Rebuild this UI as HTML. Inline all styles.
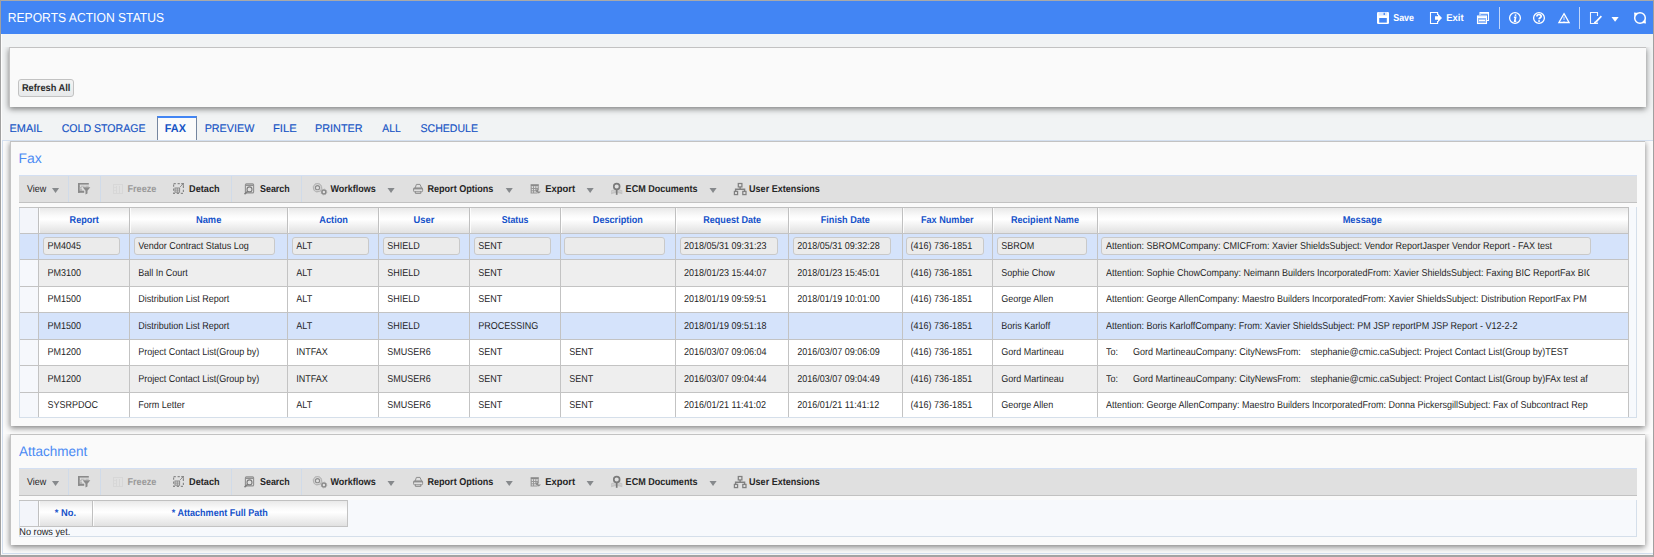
<!DOCTYPE html><html><head><meta charset='utf-8'><title>Reports Action Status</title><style>
html,body{margin:0;padding:0}
body{width:1654px;height:557px;position:relative;overflow:hidden;background:#f1f3f4;font-family:"Liberation Sans", sans-serif;}
.a{position:absolute;box-sizing:border-box}
.t{position:absolute;white-space:pre;line-height:20px;transform-origin:0 0;font-family:"Liberation Sans", sans-serif;text-rendering:geometricPrecision}
.c{position:absolute;white-space:pre;line-height:20px;font-size:10px;color:#1f1f1f;overflow:hidden;transform:scaleX(.9);transform-origin:0 0}
.panel{position:absolute;box-sizing:border-box;background:#fafafa;border-top:1px solid #c2c2c2;border-left:1px solid #c4c4c4;box-shadow:0 1.5px 6px rgba(0,0,0,.5);clip-path:inset(0 -14px -14px -14px)}
.tbar{position:absolute;box-sizing:border-box;background:#e0e0e0;border-top:1px solid #d3dff2;border-bottom:1px solid #c2c2c2}
.sep{position:absolute;width:1px;background:#d0dbe9}
.hc{position:absolute;box-sizing:border-box;border-left:1px solid #c0c0c0;border-top:1px solid #c0c0c0;border-bottom:1px solid #c0c0c0;background:linear-gradient(#e9e9e9 0%,#fafafa 30%,#ffffff 45%,#f4f4f4 65%,#e1e1e1 100%);box-shadow:inset 1px 0 0 rgba(255,255,255,.8)}
.in{position:absolute;box-sizing:border-box;border:1px solid #c9c9c9;border-radius:3px;background:#ebebeb}
.vl{position:absolute;width:1px;background:#c4c4c4}
.hl{position:absolute;height:1px;background:#c4c4c4}
svg{position:absolute;overflow:visible}
</style></head><body><div class='a' style='left:2px;top:140px;width:1651px;height:414px;border:1px solid #d3dfef;border-right:none;background:#fbfbfb'></div><div class='a' style='left:0px;top:0px;width:1654px;height:1px;background:#a9a9a9;z-index:5'></div><div class='a' style='left:0px;top:0px;width:1px;height:557px;background:#a0a0a0;z-index:5'></div><div class='a' style='left:1px;top:34px;width:1px;height:521px;background:#fdfdfd;z-index:5'></div><div class='a' style='left:1653px;top:0px;width:1px;height:557px;background:#a0a0a0;z-index:5'></div><div class='a' style='left:0px;top:555px;width:1654px;height:2px;background:#a3a3a3;z-index:5'></div><div class='a' style='left:1px;top:554px;width:1652px;height:1px;background:#f4f5f6;z-index:5'></div><div class='a' style='left:1px;top:1px;width:1652px;height:33px;background:#4285f4'></div><svg class='a' style='left:0;top:0' width='1654' height='36' viewBox='0 0 1654 36'><g><rect x='1377' y='12' width='12' height='12' rx='1.3' fill='#fff'/><rect x='1379.2' y='18' width='7.6' height='4.6' fill='#4285f4'/><rect x='1378.6' y='12' width='8.6' height='3.6' fill='#dbe7fd'/><rect x='1383.6' y='12.8' width='1.3' height='2.2' fill='#4285f4'/></g><g><path d='M1437.6 15v-2.5h-7.1v11h7.1V21' fill='none' stroke='#fff' stroke-width='1.1'/><path d='M1435 16.2h3v-2.4l4 4.2-4 4.2v-2.4h-3z' fill='#fff'/></g><g fill='none' stroke='#fff' stroke-width='1.1'><path d='M1480 15v-2.5h8.5v8h-2' /><path d='M1480.5 13.4h8' stroke-width='1.8' opacity='.8'/><rect x='1477.5' y='16' width='9' height='7.5' fill='#8db6f8'/><path d='M1477.5 17.2h9' stroke-width='1.6'/><path d='M1479 20.4h6' stroke-width='1.3'/></g><rect x='1499' y='7' width='1' height='22' fill='#d5e3fb' opacity='.85'/><rect x='1579' y='7' width='1' height='22' fill='#d5e3fb' opacity='.85'/><circle cx='1515' cy='18' r='5.4' fill='none' stroke='#fff' stroke-width='1.3'/><path d='M1515.7 14.3l-.3 1.6M1513.9 17.3h1.7l-.9 3.9h1.6' stroke='#fff' stroke-width='1.6' fill='none'/><circle cx='1539' cy='18' r='5.4' fill='none' stroke='#fff' stroke-width='1.3'/><path d='M1536.9 16.5c0-2.6 4.3-2.6 4.3-.2 0 1.5-2.1 1.5-2.1 3' stroke='#fff' stroke-width='1.7' fill='none'/><rect x='1538.2' y='20.2' width='1.7' height='1.7' fill='#fff'/><path d='M1564 13.7l5.1 8.8h-10.2z' fill='none' stroke='#fff' stroke-width='1.3'/><path d='M1564 16.6v3.4M1564 21v.9' stroke='#cfe0fc' stroke-width='1'/><path d='M1597.5 16v-3.5h-7v11h7v-1' fill='none' stroke='#fff' stroke-width='1.1' opacity='.92'/><path d='M1601.4 16.2l-6.6 7' stroke='#fff' stroke-width='1.7'/><path d='M1593.6 23.6l1-2 1.2 1.2z' fill='#fff'/><path d='M1611.5 17h7.2l-3.6 4.8z' fill='#fff'/><circle cx='1640' cy='18' r='5.3' fill='none' stroke='#fff' stroke-width='1.5'/><path d='M1634 12.6l4.6.4-4 4zM1646 23.4l-4.6-.4 4-4z' fill='#fff'/></svg><div class='panel' style='left:9px;top:47px;width:1637px;height:60px'></div><div class='a' style='left:18px;top:79px;width:56px;height:18px;border:1px solid #c2c2c2;border-radius:3px;background:linear-gradient(#f3f3f3,#e7e9eb)'></div><div class='a' style='left:157px;top:116px;width:40px;height:24px;background:#fbfbfb;border:1px solid #75869f;border-top:2px solid #4285f4;border-bottom:none'></div><div class='panel' style='left:10px;top:141px;width:1635px;height:285px'></div><div class='tbar' style='left:19px;top:175px;width:1618px;height:28px'></div><div class='sep' style='left:68px;top:176px;height:26px'></div><div class='sep' style='left:100px;top:176px;height:26px'></div><div class='sep' style='left:231px;top:176px;height:26px'></div><div class='sep' style='left:301px;top:176px;height:26px'></div><svg class='a' style='left:0;top:0px' width='1654' height='210' viewBox='0 0 1654 210'><path d='M52.0 187.9h7.1l-3.55 5z' fill='#86898c'/><path d='M387.5 187.9h7.1l-3.55 5z' fill='#86898c'/><path d='M505.7 187.9h7.1l-3.55 5z' fill='#86898c'/><path d='M586.6 187.9h7.1l-3.55 5z' fill='#86898c'/><path d='M709.5 187.9h7.1l-3.55 5z' fill='#86898c'/><g fill='#8a8a8a'><rect x='78' y='183' width='10.8' height='1.6'/><rect x='78' y='183' width='1.7' height='9.8'/><rect x='78' y='190.7' width='6.2' height='2.1'/><path d='M78 185.7h2.2v.9h-2.2zM81 185.7h3.6v.9h-3.6zM85.4 185.7h3.4v.9h-3.4z' opacity='.75'/><rect x='79.7' y='187.4' width='2' height='1' opacity='.8'/><rect x='79.7' y='189.4' width='2.4' height='1' opacity='.8'/><path d='M82.7 187.2h7.6l-2.8 3.5v2.9l-2 .8v-3.7z'/></g><g stroke='#d7d7d7' fill='none' stroke-width='1'><rect x='113.5' y='184.5' width='9' height='9'/><path d='M116.5 186v7M119.5 186v7'/><path d='M114 187.5h2M114 190.5h2' stroke-width='.8'/></g><g stroke='#8a8a8a' fill='none' stroke-width='1.2'><rect x='173.6' y='183.6' width='9.8' height='9.8' stroke-dasharray='2.2 1.8'/><rect x='175' y='188' width='4.6' height='4.2' stroke-width='1'/><path d='M175 190.1h4.6M177.3 188v4.2' stroke-width='.8'/><path d='M180 187l3-3M181 183.8h2.4v2.4' stroke-width='.9'/></g><g stroke='#909090' fill='none'><rect x='245.4' y='183.7' width='8.2' height='9.2' rx='1' stroke-width='1.1'/><path d='M245.4 185.2h8.2' stroke-width='1.6'/><circle cx='249.5' cy='189.4' r='2.5' stroke-width='1.1' stroke='#7c7c7c'/><path d='M247.7 191.3l-3.2 2.8' stroke-width='1.5' stroke='#7c7c7c'/></g><g fill='none'><circle cx='317.5' cy='187.7' r='4' stroke='#b3b3b3' stroke-width='1.3'/><circle cx='317.5' cy='187.7' r='4.4' stroke='#bdbdbd' stroke-width='.9' stroke-dasharray='1.6 1.85'/><circle cx='317.5' cy='187.7' r='2.1' stroke='#8c8c8c' stroke-width='1.15'/><circle cx='323.9' cy='192' r='2' stroke='#8a8a8a' stroke-width='1.6'/><circle cx='323.9' cy='192' r='3' stroke='#a8a8a8' stroke-width='.7' stroke-dasharray='1.2 1.15'/></g><g stroke='#8e8e8e' fill='none' stroke-width='1'><path d='M415.2 188l1.2-3.6h3.6l1.6 3.6'/><rect x='413.6' y='188' width='9' height='3.8' rx='1'/><path d='M413.6 188.6h9' stroke-width='1.6'/><path d='M415.4 191.2v2.2h5.4v-2.2' /></g><g fill='#8a8a8a'><rect x='530.6' y='184.2' width='8.2' height='2'/><path d='M530.6 186.2h1.2v7.4h-1.2zM533 186.2h1v7.4h-1zM535.3 186.2h1v4h-1zM537.7 186.2h1.1v4h-1.1zM530.6 188h8v.9h-8zM530.6 190.3h6v.9h-6zM530.6 192.6h7v1h-7z' opacity='.85'/><path d='M536.6 189.2l1.5 0 .2 2.2h2.7l-2.2 2.2-3-2z'/></g><g><path d='M611 190.6l4.9-2.2v4.6l-4.9 1.2zM622.3 190.6l-4.9-2.2v4.6l4.9 1.2z' fill='#c4c4c4'/><path d='M611.6 192l3.6-1.4M618.2 190.6l3.6 1.4' stroke='#d6d6d6' stroke-width='.7'/><circle cx='616.7' cy='186.5' r='2.9' fill='#e0e0e0' stroke='#7a7a7a' stroke-width='1.7'/><rect x='615.85' y='189.6' width='1.7' height='5.2' fill='#7a7a7a'/></g><g stroke='#808080' fill='none' stroke-width='1.25'><rect x='738.3' y='183.5' width='3.6' height='3.4'/><path d='M740.1 187v2.2M735.6 191.4v-2.2h9v2.2' stroke-width='1.4'/><rect x='734.4' y='191.4' width='3.2' height='3.2'/><rect x='742.8' y='191.4' width='3.2' height='3.2'/></g></svg><div class='a' style='left:19px;top:207px;width:1618px;height:211px;border:1px solid #d5dfea;border-top:none;background:#f7f9fc'></div><div class='a' style='left:19px;top:207px;width:1610px;height:1px;background:#c3c3c3'></div><div class='a' style='left:20px;top:208px;width:18px;height:25px;background:#f3f5fa'></div><div class='hc' style='left:38px;top:207px;width:91px;height:27px'></div><div class='hc' style='left:129px;top:207px;width:158px;height:27px'></div><div class='hc' style='left:287px;top:207px;width:91px;height:27px'></div><div class='hc' style='left:378px;top:207px;width:91px;height:27px'></div><div class='hc' style='left:469px;top:207px;width:91px;height:27px'></div><div class='hc' style='left:560px;top:207px;width:115px;height:27px'></div><div class='hc' style='left:675px;top:207px;width:113px;height:27px'></div><div class='hc' style='left:788px;top:207px;width:114px;height:27px'></div><div class='hc' style='left:902px;top:207px;width:90px;height:27px'></div><div class='hc' style='left:992px;top:207px;width:105px;height:27px'></div><div class='hc' style='left:1097px;top:207px;width:531px;height:27px'></div><div class='a' style='left:20px;top:234px;width:18px;height:25px;background:#d5e3fb'></div><div class='a' style='left:39px;top:234px;width:1589px;height:25px;background:#d5e3fb'></div><div class='a' style='left:20px;top:260px;width:18px;height:26px;background:#f6f8fc'></div><div class='a' style='left:39px;top:260px;width:1589px;height:26px;background:#eeeeee'></div><div class='a' style='left:20px;top:287px;width:18px;height:25px;background:#f6f8fc'></div><div class='a' style='left:39px;top:287px;width:1589px;height:25px;background:#ffffff'></div><div class='a' style='left:20px;top:313px;width:18px;height:26px;background:#e4edfc'></div><div class='a' style='left:39px;top:313px;width:1589px;height:26px;background:#d5e3fb'></div><div class='a' style='left:20px;top:340px;width:18px;height:25px;background:#f6f8fc'></div><div class='a' style='left:39px;top:340px;width:1589px;height:25px;background:#ffffff'></div><div class='a' style='left:20px;top:366px;width:18px;height:26px;background:#f6f8fc'></div><div class='a' style='left:39px;top:366px;width:1589px;height:26px;background:#eeeeee'></div><div class='a' style='left:20px;top:393px;width:18px;height:24px;background:#f6f8fc'></div><div class='a' style='left:39px;top:393px;width:1589px;height:24px;background:#ffffff'></div><div class='hl' style='left:20px;top:233px;width:1608px;background:#c3c3c3'></div><div class='hl' style='left:20px;top:259px;width:1608px;background:#c3c3c3'></div><div class='hl' style='left:20px;top:286px;width:1608px;background:#c3c3c3'></div><div class='hl' style='left:20px;top:312px;width:1608px;background:#c3c3c3'></div><div class='hl' style='left:20px;top:339px;width:1608px;background:#c3c3c3'></div><div class='hl' style='left:20px;top:365px;width:1608px;background:#c3c3c3'></div><div class='hl' style='left:20px;top:392px;width:1608px;background:#c3c3c3'></div><div class='vl' style='left:38px;top:233px;height:184px;background:#c3c3c3'></div><div class='vl' style='left:129px;top:233px;height:184px;background:#c3c3c3'></div><div class='vl' style='left:287px;top:233px;height:184px;background:#c3c3c3'></div><div class='vl' style='left:378px;top:233px;height:184px;background:#c3c3c3'></div><div class='vl' style='left:469px;top:233px;height:184px;background:#c3c3c3'></div><div class='vl' style='left:560px;top:233px;height:184px;background:#c3c3c3'></div><div class='vl' style='left:675px;top:233px;height:184px;background:#c3c3c3'></div><div class='vl' style='left:788px;top:233px;height:184px;background:#c3c3c3'></div><div class='vl' style='left:902px;top:233px;height:184px;background:#c3c3c3'></div><div class='vl' style='left:992px;top:233px;height:184px;background:#c3c3c3'></div><div class='vl' style='left:1097px;top:233px;height:184px;background:#c3c3c3'></div><div class='vl' style='left:1628px;top:233px;height:184px;background:#c3c3c3'></div><div class='vl' style='left:1628px;top:207px;height:27px;background:#c0c0c0'></div><div class='in' style='left:43.4px;top:237px;width:76.4px;height:17.6px'></div><div class='in' style='left:134.3px;top:237px;width:140.5px;height:17.6px'></div><div class='in' style='left:292.0px;top:237px;width:76.7px;height:17.6px'></div><div class='in' style='left:383.4px;top:237px;width:76.3px;height:17.6px'></div><div class='in' style='left:474.1px;top:237px;width:76.5px;height:17.6px'></div><div class='in' style='left:564.3px;top:237px;width:100.6px;height:17.6px'></div><div class='in' style='left:680.1px;top:237px;width:97.5px;height:17.6px'></div><div class='in' style='left:793.1px;top:237px;width:97.5px;height:17.6px'></div><div class='in' style='left:906.3px;top:237px;width:77.4px;height:17.6px'></div><div class='in' style='left:997.2px;top:237px;width:89.4px;height:17.6px'></div><div class='in' style='left:1101.3px;top:237px;width:490.2px;height:17.6px'></div><div class='panel' style='left:10px;top:434px;width:1635px;height:111px'></div><div class='tbar' style='left:19px;top:468px;width:1618px;height:28px'></div><div class='sep' style='left:68px;top:469px;height:26px'></div><div class='sep' style='left:100px;top:469px;height:26px'></div><div class='sep' style='left:231px;top:469px;height:26px'></div><div class='sep' style='left:301px;top:469px;height:26px'></div><svg class='a' style='left:0;top:293px' width='1654' height='210' viewBox='0 0 1654 210'><path d='M52.0 187.9h7.1l-3.55 5z' fill='#86898c'/><path d='M387.5 187.9h7.1l-3.55 5z' fill='#86898c'/><path d='M505.7 187.9h7.1l-3.55 5z' fill='#86898c'/><path d='M586.6 187.9h7.1l-3.55 5z' fill='#86898c'/><path d='M709.5 187.9h7.1l-3.55 5z' fill='#86898c'/><g fill='#8a8a8a'><rect x='78' y='183' width='10.8' height='1.6'/><rect x='78' y='183' width='1.7' height='9.8'/><rect x='78' y='190.7' width='6.2' height='2.1'/><path d='M78 185.7h2.2v.9h-2.2zM81 185.7h3.6v.9h-3.6zM85.4 185.7h3.4v.9h-3.4z' opacity='.75'/><rect x='79.7' y='187.4' width='2' height='1' opacity='.8'/><rect x='79.7' y='189.4' width='2.4' height='1' opacity='.8'/><path d='M82.7 187.2h7.6l-2.8 3.5v2.9l-2 .8v-3.7z'/></g><g stroke='#d7d7d7' fill='none' stroke-width='1'><rect x='113.5' y='184.5' width='9' height='9'/><path d='M116.5 186v7M119.5 186v7'/><path d='M114 187.5h2M114 190.5h2' stroke-width='.8'/></g><g stroke='#8a8a8a' fill='none' stroke-width='1.2'><rect x='173.6' y='183.6' width='9.8' height='9.8' stroke-dasharray='2.2 1.8'/><rect x='175' y='188' width='4.6' height='4.2' stroke-width='1'/><path d='M175 190.1h4.6M177.3 188v4.2' stroke-width='.8'/><path d='M180 187l3-3M181 183.8h2.4v2.4' stroke-width='.9'/></g><g stroke='#909090' fill='none'><rect x='245.4' y='183.7' width='8.2' height='9.2' rx='1' stroke-width='1.1'/><path d='M245.4 185.2h8.2' stroke-width='1.6'/><circle cx='249.5' cy='189.4' r='2.5' stroke-width='1.1' stroke='#7c7c7c'/><path d='M247.7 191.3l-3.2 2.8' stroke-width='1.5' stroke='#7c7c7c'/></g><g fill='none'><circle cx='317.5' cy='187.7' r='4' stroke='#b3b3b3' stroke-width='1.3'/><circle cx='317.5' cy='187.7' r='4.4' stroke='#bdbdbd' stroke-width='.9' stroke-dasharray='1.6 1.85'/><circle cx='317.5' cy='187.7' r='2.1' stroke='#8c8c8c' stroke-width='1.15'/><circle cx='323.9' cy='192' r='2' stroke='#8a8a8a' stroke-width='1.6'/><circle cx='323.9' cy='192' r='3' stroke='#a8a8a8' stroke-width='.7' stroke-dasharray='1.2 1.15'/></g><g stroke='#8e8e8e' fill='none' stroke-width='1'><path d='M415.2 188l1.2-3.6h3.6l1.6 3.6'/><rect x='413.6' y='188' width='9' height='3.8' rx='1'/><path d='M413.6 188.6h9' stroke-width='1.6'/><path d='M415.4 191.2v2.2h5.4v-2.2' /></g><g fill='#8a8a8a'><rect x='530.6' y='184.2' width='8.2' height='2'/><path d='M530.6 186.2h1.2v7.4h-1.2zM533 186.2h1v7.4h-1zM535.3 186.2h1v4h-1zM537.7 186.2h1.1v4h-1.1zM530.6 188h8v.9h-8zM530.6 190.3h6v.9h-6zM530.6 192.6h7v1h-7z' opacity='.85'/><path d='M536.6 189.2l1.5 0 .2 2.2h2.7l-2.2 2.2-3-2z'/></g><g><path d='M611 190.6l4.9-2.2v4.6l-4.9 1.2zM622.3 190.6l-4.9-2.2v4.6l4.9 1.2z' fill='#c4c4c4'/><path d='M611.6 192l3.6-1.4M618.2 190.6l3.6 1.4' stroke='#d6d6d6' stroke-width='.7'/><circle cx='616.7' cy='186.5' r='2.9' fill='#e0e0e0' stroke='#7a7a7a' stroke-width='1.7'/><rect x='615.85' y='189.6' width='1.7' height='5.2' fill='#7a7a7a'/></g><g stroke='#808080' fill='none' stroke-width='1.25'><rect x='738.3' y='183.5' width='3.6' height='3.4'/><path d='M740.1 187v2.2M735.6 191.4v-2.2h9v2.2' stroke-width='1.4'/><rect x='734.4' y='191.4' width='3.2' height='3.2'/><rect x='742.8' y='191.4' width='3.2' height='3.2'/></g></svg><div class='a' style='left:19px;top:500px;width:1618px;height:37px;border:1px solid #d5dfea;border-top:none;background:#f7f9fc'></div><div class='a' style='left:19px;top:500px;width:329px;height:1px;background:#c3c3c3'></div><div class='a' style='left:20px;top:501px;width:18px;height:25px;background:#f3f5fa'></div><div class='hc' style='left:38px;top:500px;width:54px;height:27px'></div><div class='hc' style='left:92px;top:500px;width:255px;height:27px'></div><div class='vl' style='left:347px;top:500px;height:27px;background:#c3c3c3'></div><div class='hl' style='left:20px;top:526px;width:328px;background:#c3c3c3'></div><span class='t' id='t0' style='left:7px;top:8px;font-size:13px;font-weight:400;color:#fff;transform:translate(0.73px,0) scaleX(0.9330)'>REPORTS ACTION STATUS</span><span class='t' id='t1' style='left:1393px;top:9px;font-size:10px;font-weight:700;color:#fff;transform:translate(0.19px,0) scaleX(0.8911)'>Save</span><span class='t' id='t2' style='left:1446px;top:9px;font-size:10px;font-weight:700;color:#fff;transform:translate(0.24px,0) scaleX(0.9458)'>Exit</span><span class='t' id='t3' style='left:21px;top:79px;font-size:10px;font-weight:700;color:#2a2a2a;transform:translate(0.95px,0) scaleX(0.9236)'>Refresh All</span><span class='t' id='t4' style='left:9px;top:119px;font-size:11.2px;font-weight:400;color:#1452c4;transform:translate(0.62px,0) scaleX(0.9708);-webkit-text-stroke:.14px #1452c4'>EMAIL</span><span class='t' id='t5' style='left:61px;top:119px;font-size:11.2px;font-weight:400;color:#1452c4;transform:translate(0.69px,0) scaleX(0.9459);-webkit-text-stroke:.14px #1452c4'>COLD STORAGE</span><span class='t' id='t6' style='left:164px;top:119px;font-size:11.2px;font-weight:700;color:#1452c4;transform:translate(0.77px,0) scaleX(0.9714)'>FAX</span><span class='t' id='t7' style='left:204px;top:119px;font-size:11.2px;font-weight:400;color:#1452c4;transform:translate(0.68px,0) scaleX(0.9616);-webkit-text-stroke:.14px #1452c4'>PREVIEW</span><span class='t' id='t8' style='left:272px;top:119px;font-size:11.2px;font-weight:400;color:#1452c4;transform:translate(1.00px,0) scaleX(1.0046);-webkit-text-stroke:.14px #1452c4'>FILE</span><span class='t' id='t9' style='left:315px;top:119px;font-size:11.2px;font-weight:400;color:#1452c4;transform:translate(0.03px,0) scaleX(0.9684);-webkit-text-stroke:.14px #1452c4'>PRINTER</span><span class='t' id='t10' style='left:382px;top:119px;font-size:11.2px;font-weight:400;color:#1452c4;transform:translate(0.36px,0) scaleX(0.9233);-webkit-text-stroke:.14px #1452c4'>ALL</span><span class='t' id='t11' style='left:420px;top:119px;font-size:11.2px;font-weight:400;color:#1452c4;transform:translate(0.58px,0) scaleX(0.9408);-webkit-text-stroke:.14px #1452c4'>SCHEDULE</span><span class='t' id='t12' style='left:18px;top:148px;font-size:14px;font-weight:400;color:#4a8af4;transform:translate(0.41px,0) scaleX(0.9955)'>Fax</span><span class='t' id='t13' style='left:19px;top:441px;font-size:14px;font-weight:400;color:#4a8af4;transform:translate(0.05px,0) scaleX(0.9640)'>Attachment</span><span class='t' id='t14' style='left:26px;top:180px;font-size:10px;font-weight:400;color:#262626;transform:translate(0.91px,0) scaleX(0.8990)'>View</span><span class='t' id='t15' style='left:127px;top:180px;font-size:10px;font-weight:700;color:#9a9a9a;transform:translate(0.40px,0) scaleX(0.9155)'>Freeze</span><span class='t' id='t16' style='left:189px;top:180px;font-size:10px;font-weight:700;color:#262626;transform:translate(0.10px,0) scaleX(0.9132)'>Detach</span><span class='t' id='t17' style='left:259px;top:180px;font-size:10px;font-weight:700;color:#262626;transform:translate(1.00px,0) scaleX(0.8900)'>Search</span><span class='t' id='t18' style='left:330px;top:180px;font-size:10px;font-weight:700;color:#262626;transform:translate(0.50px,0) scaleX(0.8990)'>Workflows</span><span class='t' id='t19' style='left:427px;top:180px;font-size:10px;font-weight:700;color:#262626;transform:translate(0.46px,0) scaleX(0.9059)'>Report Options</span><span class='t' id='t20' style='left:545px;top:180px;font-size:10px;font-weight:700;color:#262626;transform:translate(0.29px,0) scaleX(0.9415)'>Export</span><span class='t' id='t21' style='left:625px;top:180px;font-size:10px;font-weight:700;color:#262626;transform:translate(0.60px,0) scaleX(0.9045)'>ECM Documents</span><span class='t' id='t22' style='left:749px;top:180px;font-size:10px;font-weight:700;color:#262626;transform:translate(0.05px,0) scaleX(0.9039)'>User Extensions</span><span class='t' id='t23' style='left:26px;top:473px;font-size:10px;font-weight:400;color:#262626;transform:translate(0.91px,0) scaleX(0.8990)'>View</span><span class='t' id='t24' style='left:127px;top:473px;font-size:10px;font-weight:700;color:#9a9a9a;transform:translate(0.40px,0) scaleX(0.9155)'>Freeze</span><span class='t' id='t25' style='left:189px;top:473px;font-size:10px;font-weight:700;color:#262626;transform:translate(0.10px,0) scaleX(0.9132)'>Detach</span><span class='t' id='t26' style='left:259px;top:473px;font-size:10px;font-weight:700;color:#262626;transform:translate(1.00px,0) scaleX(0.8900)'>Search</span><span class='t' id='t27' style='left:330px;top:473px;font-size:10px;font-weight:700;color:#262626;transform:translate(0.50px,0) scaleX(0.8990)'>Workflows</span><span class='t' id='t28' style='left:427px;top:473px;font-size:10px;font-weight:700;color:#262626;transform:translate(0.46px,0) scaleX(0.9059)'>Report Options</span><span class='t' id='t29' style='left:545px;top:473px;font-size:10px;font-weight:700;color:#262626;transform:translate(0.29px,0) scaleX(0.9415)'>Export</span><span class='t' id='t30' style='left:625px;top:473px;font-size:10px;font-weight:700;color:#262626;transform:translate(0.60px,0) scaleX(0.9045)'>ECM Documents</span><span class='t' id='t31' style='left:749px;top:473px;font-size:10px;font-weight:700;color:#262626;transform:translate(0.05px,0) scaleX(0.9039)'>User Extensions</span><span class='t' id='t32' style='left:69px;top:211px;font-size:10px;font-weight:700;color:#1451c9;transform:translate(0.60px,0) scaleX(0.9064)'>Report</span><span class='t' id='t33' style='left:195px;top:211px;font-size:10px;font-weight:700;color:#1451c9;transform:translate(0.94px,0) scaleX(0.9315)'>Name</span><span class='t' id='t34' style='left:319px;top:211px;font-size:10px;font-weight:700;color:#1451c9;transform:translate(0.32px,0) scaleX(0.9190)'>Action</span><span class='t' id='t35' style='left:413px;top:211px;font-size:10px;font-weight:700;color:#1451c9;transform:translate(0.53px,0) scaleX(0.9360)'>User</span><span class='t' id='t36' style='left:501px;top:211px;font-size:10px;font-weight:700;color:#1451c9;transform:translate(0.70px,0) scaleX(0.8757)'>Status</span><span class='t' id='t37' style='left:592px;top:211px;font-size:10px;font-weight:700;color:#1451c9;transform:translate(0.82px,0) scaleX(0.9107)'>Description</span><span class='t' id='t38' style='left:703px;top:211px;font-size:10px;font-weight:700;color:#1451c9;transform:translate(0.27px,0) scaleX(0.9044)'>Request Date</span><span class='t' id='t39' style='left:820px;top:211px;font-size:10px;font-weight:700;color:#1451c9;transform:translate(0.76px,0) scaleX(0.9119)'>Finish Date</span><span class='t' id='t40' style='left:920px;top:211px;font-size:10px;font-weight:700;color:#1451c9;transform:translate(0.96px,0) scaleX(0.9114)'>Fax Number</span><span class='t' id='t41' style='left:1010px;top:211px;font-size:10px;font-weight:700;color:#1451c9;transform:translate(0.96px,0) scaleX(0.9061)'>Recipient Name</span><span class='t' id='t42' style='left:1342px;top:211px;font-size:10px;font-weight:700;color:#1451c9;transform:translate(0.64px,0) scaleX(0.9285)'>Message</span><span class='t' id='t43' style='left:54px;top:504px;font-size:10px;font-weight:700;color:#1451c9;transform:translate(0.86px,0) scaleX(0.9318)'>* No.</span><span class='t' id='t44' style='left:171px;top:504px;font-size:10px;font-weight:700;color:#1451c9;transform:translate(0.86px,0) scaleX(0.9021)'>* Attachment Full Path</span><span class='t' id='t45' style='left:19px;top:523px;font-size:10px;font-weight:400;color:#222;transform:translate(0.31px,0) scaleX(0.9167)'>No rows yet.</span><span class='t' id='t46' style='left:47px;top:237px;font-size:10px;font-weight:400;color:#1f1f1f;transform:translate(0.40px,0) scaleX(0.9000);clip-path:inset(0 calc(100% - 89.6px) 0 0)'>PM4045</span><span class='t' id='t47' style='left:138px;top:237px;font-size:10px;font-weight:400;color:#1f1f1f;transform:translate(0.30px,0) scaleX(0.9000);clip-path:inset(0 calc(100% - 164.1px) 0 0)'>Vendor Contract Status Log</span><span class='t' id='t48' style='left:296px;top:237px;font-size:10px;font-weight:400;color:#1f1f1f;transform:translate(0.30px,0) scaleX(0.9000);clip-path:inset(0 calc(100% - 89.7px) 0 0)'>ALT</span><span class='t' id='t49' style='left:387px;top:237px;font-size:10px;font-weight:400;color:#1f1f1f;transform:translate(0.30px,0) scaleX(0.9000);clip-path:inset(0 calc(100% - 89.7px) 0 0)'>SHIELD</span><span class='t' id='t50' style='left:478px;top:237px;font-size:10px;font-weight:400;color:#1f1f1f;transform:translate(0.30px,0) scaleX(0.9000);clip-path:inset(0 calc(100% - 89.7px) 0 0)'>SENT</span><span class='t' id='t51' style='left:684px;top:237px;font-size:10px;font-weight:400;color:#1f1f1f;transform:translate(0.00px,0) scaleX(0.9000);clip-path:inset(0 calc(100% - 114.4px) 0 0)'>2018/05/31 09:31:23</span><span class='t' id='t52' style='left:797px;top:237px;font-size:10px;font-weight:400;color:#1f1f1f;transform:translate(0.30px,0) scaleX(0.9000);clip-path:inset(0 calc(100% - 115.2px) 0 0)'>2018/05/31 09:32:28</span><span class='t' id='t53' style='left:910px;top:237px;font-size:10px;font-weight:400;color:#1f1f1f;transform:translate(0.60px,0) scaleX(0.9000);clip-path:inset(0 calc(100% - 89.3px) 0 0)'>(416) 736-1851</span><span class='t' id='t54' style='left:1001px;top:237px;font-size:10px;font-weight:400;color:#1f1f1f;transform:translate(0.30px,0) scaleX(0.9000);clip-path:inset(0 calc(100% - 105.2px) 0 0)'>SBROM</span><span class='t' id='t55' style='left:1105px;top:237px;font-size:10px;font-weight:400;color:#1f1f1f;transform:translate(0.90px,0) scaleX(0.9000);clip-path:inset(0 calc(100% - 537.3px) 0 0)'>Attention: SBROMCompany: CMICFrom: Xavier ShieldsSubject: Vendor ReportJasper Vendor Report - FAX test</span><span class='t' id='t56' style='left:47px;top:264px;font-size:10px;font-weight:400;color:#1f1f1f;transform:translate(0.40px,0) scaleX(0.9000);clip-path:inset(0 calc(100% - 89.6px) 0 0)'>PM3100</span><span class='t' id='t57' style='left:138px;top:264px;font-size:10px;font-weight:400;color:#1f1f1f;transform:translate(0.30px,0) scaleX(0.9000);clip-path:inset(0 calc(100% - 164.1px) 0 0)'>Ball In Court</span><span class='t' id='t58' style='left:296px;top:264px;font-size:10px;font-weight:400;color:#1f1f1f;transform:translate(0.30px,0) scaleX(0.9000);clip-path:inset(0 calc(100% - 89.7px) 0 0)'>ALT</span><span class='t' id='t59' style='left:387px;top:264px;font-size:10px;font-weight:400;color:#1f1f1f;transform:translate(0.30px,0) scaleX(0.9000);clip-path:inset(0 calc(100% - 89.7px) 0 0)'>SHIELD</span><span class='t' id='t60' style='left:478px;top:264px;font-size:10px;font-weight:400;color:#1f1f1f;transform:translate(0.30px,0) scaleX(0.9000);clip-path:inset(0 calc(100% - 89.7px) 0 0)'>SENT</span><span class='t' id='t61' style='left:684px;top:264px;font-size:10px;font-weight:400;color:#1f1f1f;transform:translate(0.00px,0) scaleX(0.9000);clip-path:inset(0 calc(100% - 114.4px) 0 0)'>2018/01/23 15:44:07</span><span class='t' id='t62' style='left:797px;top:264px;font-size:10px;font-weight:400;color:#1f1f1f;transform:translate(0.30px,0) scaleX(0.9000);clip-path:inset(0 calc(100% - 115.2px) 0 0)'>2018/01/23 15:45:01</span><span class='t' id='t63' style='left:910px;top:264px;font-size:10px;font-weight:400;color:#1f1f1f;transform:translate(0.60px,0) scaleX(0.9000);clip-path:inset(0 calc(100% - 89.3px) 0 0)'>(416) 736-1851</span><span class='t' id='t64' style='left:1001px;top:264px;font-size:10px;font-weight:400;color:#1f1f1f;transform:translate(0.30px,0) scaleX(0.9000);clip-path:inset(0 calc(100% - 105.2px) 0 0)'>Sophie Chow</span><span class='t' id='t65' style='left:1105px;top:264px;font-size:10px;font-weight:400;color:#1f1f1f;transform:translate(0.90px,0) scaleX(0.9000);clip-path:inset(0 calc(100% - 537.3px) 0 0)'>Attention: Sophie ChowCompany: Neimann Builders IncorporatedFrom: Xavier ShieldsSubject: Faxing BIC ReportFax BIC</span><span class='t' id='t66' style='left:47px;top:290px;font-size:10px;font-weight:400;color:#1f1f1f;transform:translate(0.40px,0) scaleX(0.9000);clip-path:inset(0 calc(100% - 89.6px) 0 0)'>PM1500</span><span class='t' id='t67' style='left:138px;top:290px;font-size:10px;font-weight:400;color:#1f1f1f;transform:translate(0.30px,0) scaleX(0.9000);clip-path:inset(0 calc(100% - 164.1px) 0 0)'>Distribution List Report</span><span class='t' id='t68' style='left:296px;top:290px;font-size:10px;font-weight:400;color:#1f1f1f;transform:translate(0.30px,0) scaleX(0.9000);clip-path:inset(0 calc(100% - 89.7px) 0 0)'>ALT</span><span class='t' id='t69' style='left:387px;top:290px;font-size:10px;font-weight:400;color:#1f1f1f;transform:translate(0.30px,0) scaleX(0.9000);clip-path:inset(0 calc(100% - 89.7px) 0 0)'>SHIELD</span><span class='t' id='t70' style='left:478px;top:290px;font-size:10px;font-weight:400;color:#1f1f1f;transform:translate(0.30px,0) scaleX(0.9000);clip-path:inset(0 calc(100% - 89.7px) 0 0)'>SENT</span><span class='t' id='t71' style='left:684px;top:290px;font-size:10px;font-weight:400;color:#1f1f1f;transform:translate(0.00px,0) scaleX(0.9000);clip-path:inset(0 calc(100% - 114.4px) 0 0)'>2018/01/19 09:59:51</span><span class='t' id='t72' style='left:797px;top:290px;font-size:10px;font-weight:400;color:#1f1f1f;transform:translate(0.30px,0) scaleX(0.9000);clip-path:inset(0 calc(100% - 115.2px) 0 0)'>2018/01/19 10:01:00</span><span class='t' id='t73' style='left:910px;top:290px;font-size:10px;font-weight:400;color:#1f1f1f;transform:translate(0.60px,0) scaleX(0.9000);clip-path:inset(0 calc(100% - 89.3px) 0 0)'>(416) 736-1851</span><span class='t' id='t74' style='left:1001px;top:290px;font-size:10px;font-weight:400;color:#1f1f1f;transform:translate(0.30px,0) scaleX(0.9000);clip-path:inset(0 calc(100% - 105.2px) 0 0)'>George Allen</span><span class='t' id='t75' style='left:1105px;top:290px;font-size:10px;font-weight:400;color:#1f1f1f;transform:translate(0.90px,0) scaleX(0.9000);clip-path:inset(0 calc(100% - 537.3px) 0 0)'>Attention: George AllenCompany: Maestro Builders IncorporatedFrom: Xavier ShieldsSubject: Distribution ReportFax PM</span><span class='t' id='t76' style='left:47px;top:317px;font-size:10px;font-weight:400;color:#1f1f1f;transform:translate(0.40px,0) scaleX(0.9000);clip-path:inset(0 calc(100% - 89.6px) 0 0)'>PM1500</span><span class='t' id='t77' style='left:138px;top:317px;font-size:10px;font-weight:400;color:#1f1f1f;transform:translate(0.30px,0) scaleX(0.9000);clip-path:inset(0 calc(100% - 164.1px) 0 0)'>Distribution List Report</span><span class='t' id='t78' style='left:296px;top:317px;font-size:10px;font-weight:400;color:#1f1f1f;transform:translate(0.30px,0) scaleX(0.9000);clip-path:inset(0 calc(100% - 89.7px) 0 0)'>ALT</span><span class='t' id='t79' style='left:387px;top:317px;font-size:10px;font-weight:400;color:#1f1f1f;transform:translate(0.30px,0) scaleX(0.9000);clip-path:inset(0 calc(100% - 89.7px) 0 0)'>SHIELD</span><span class='t' id='t80' style='left:478px;top:317px;font-size:10px;font-weight:400;color:#1f1f1f;transform:translate(0.30px,0) scaleX(0.9000);clip-path:inset(0 calc(100% - 89.7px) 0 0)'>PROCESSING</span><span class='t' id='t81' style='left:684px;top:317px;font-size:10px;font-weight:400;color:#1f1f1f;transform:translate(0.00px,0) scaleX(0.9000);clip-path:inset(0 calc(100% - 114.4px) 0 0)'>2018/01/19 09:51:18</span><span class='t' id='t82' style='left:910px;top:317px;font-size:10px;font-weight:400;color:#1f1f1f;transform:translate(0.60px,0) scaleX(0.9000);clip-path:inset(0 calc(100% - 89.3px) 0 0)'>(416) 736-1851</span><span class='t' id='t83' style='left:1001px;top:317px;font-size:10px;font-weight:400;color:#1f1f1f;transform:translate(0.30px,0) scaleX(0.9000);clip-path:inset(0 calc(100% - 105.2px) 0 0)'>Boris Karloff</span><span class='t' id='t84' style='left:1105px;top:317px;font-size:10px;font-weight:400;color:#1f1f1f;transform:translate(0.90px,0) scaleX(0.9000);clip-path:inset(0 calc(100% - 537.3px) 0 0)'>Attention: Boris KarloffCompany: From: Xavier ShieldsSubject: PM JSP reportPM JSP Report - V12-2-2</span><span class='t' id='t85' style='left:47px;top:343px;font-size:10px;font-weight:400;color:#1f1f1f;transform:translate(0.40px,0) scaleX(0.9000);clip-path:inset(0 calc(100% - 89.6px) 0 0)'>PM1200</span><span class='t' id='t86' style='left:138px;top:343px;font-size:10px;font-weight:400;color:#1f1f1f;transform:translate(0.30px,0) scaleX(0.9000);clip-path:inset(0 calc(100% - 164.1px) 0 0)'>Project Contact List(Group by)</span><span class='t' id='t87' style='left:296px;top:343px;font-size:10px;font-weight:400;color:#1f1f1f;transform:translate(0.30px,0) scaleX(0.9000);clip-path:inset(0 calc(100% - 89.7px) 0 0)'>INTFAX</span><span class='t' id='t88' style='left:387px;top:343px;font-size:10px;font-weight:400;color:#1f1f1f;transform:translate(0.30px,0) scaleX(0.9000);clip-path:inset(0 calc(100% - 89.7px) 0 0)'>SMUSER6</span><span class='t' id='t89' style='left:478px;top:343px;font-size:10px;font-weight:400;color:#1f1f1f;transform:translate(0.30px,0) scaleX(0.9000);clip-path:inset(0 calc(100% - 89.7px) 0 0)'>SENT</span><span class='t' id='t90' style='left:569px;top:343px;font-size:10px;font-weight:400;color:#1f1f1f;transform:translate(0.30px,0) scaleX(0.9000);clip-path:inset(0 calc(100% - 116.3px) 0 0)'>SENT</span><span class='t' id='t91' style='left:684px;top:343px;font-size:10px;font-weight:400;color:#1f1f1f;transform:translate(0.00px,0) scaleX(0.9000);clip-path:inset(0 calc(100% - 114.4px) 0 0)'>2016/03/07 09:06:04</span><span class='t' id='t92' style='left:797px;top:343px;font-size:10px;font-weight:400;color:#1f1f1f;transform:translate(0.30px,0) scaleX(0.9000);clip-path:inset(0 calc(100% - 115.2px) 0 0)'>2016/03/07 09:06:09</span><span class='t' id='t93' style='left:910px;top:343px;font-size:10px;font-weight:400;color:#1f1f1f;transform:translate(0.60px,0) scaleX(0.9000);clip-path:inset(0 calc(100% - 89.3px) 0 0)'>(416) 736-1851</span><span class='t' id='t94' style='left:1001px;top:343px;font-size:10px;font-weight:400;color:#1f1f1f;transform:translate(0.30px,0) scaleX(0.9000);clip-path:inset(0 calc(100% - 105.2px) 0 0)'>Gord Martineau</span><span class='t' id='t95' style='left:1105px;top:343px;font-size:10px;font-weight:400;color:#1f1f1f;transform:translate(0.90px,0) scaleX(0.9000);clip-path:inset(0 calc(100% - 537.3px) 0 0)'>To:<span style='display:inline-block;width:16.9px'> </span>Gord MartineauCompany: CityNewsFrom:<span style='display:inline-block;width:11px'> </span>stephanie@cmic.caSubject: Project Contact List(Group by)TEST</span><span class='t' id='t96' style='left:47px;top:370px;font-size:10px;font-weight:400;color:#1f1f1f;transform:translate(0.40px,0) scaleX(0.9000);clip-path:inset(0 calc(100% - 89.6px) 0 0)'>PM1200</span><span class='t' id='t97' style='left:138px;top:370px;font-size:10px;font-weight:400;color:#1f1f1f;transform:translate(0.30px,0) scaleX(0.9000);clip-path:inset(0 calc(100% - 164.1px) 0 0)'>Project Contact List(Group by)</span><span class='t' id='t98' style='left:296px;top:370px;font-size:10px;font-weight:400;color:#1f1f1f;transform:translate(0.30px,0) scaleX(0.9000);clip-path:inset(0 calc(100% - 89.7px) 0 0)'>INTFAX</span><span class='t' id='t99' style='left:387px;top:370px;font-size:10px;font-weight:400;color:#1f1f1f;transform:translate(0.30px,0) scaleX(0.9000);clip-path:inset(0 calc(100% - 89.7px) 0 0)'>SMUSER6</span><span class='t' id='t100' style='left:478px;top:370px;font-size:10px;font-weight:400;color:#1f1f1f;transform:translate(0.30px,0) scaleX(0.9000);clip-path:inset(0 calc(100% - 89.7px) 0 0)'>SENT</span><span class='t' id='t101' style='left:569px;top:370px;font-size:10px;font-weight:400;color:#1f1f1f;transform:translate(0.30px,0) scaleX(0.9000);clip-path:inset(0 calc(100% - 116.3px) 0 0)'>SENT</span><span class='t' id='t102' style='left:684px;top:370px;font-size:10px;font-weight:400;color:#1f1f1f;transform:translate(0.00px,0) scaleX(0.9000);clip-path:inset(0 calc(100% - 114.4px) 0 0)'>2016/03/07 09:04:44</span><span class='t' id='t103' style='left:797px;top:370px;font-size:10px;font-weight:400;color:#1f1f1f;transform:translate(0.30px,0) scaleX(0.9000);clip-path:inset(0 calc(100% - 115.2px) 0 0)'>2016/03/07 09:04:49</span><span class='t' id='t104' style='left:910px;top:370px;font-size:10px;font-weight:400;color:#1f1f1f;transform:translate(0.60px,0) scaleX(0.9000);clip-path:inset(0 calc(100% - 89.3px) 0 0)'>(416) 736-1851</span><span class='t' id='t105' style='left:1001px;top:370px;font-size:10px;font-weight:400;color:#1f1f1f;transform:translate(0.30px,0) scaleX(0.9000);clip-path:inset(0 calc(100% - 105.2px) 0 0)'>Gord Martineau</span><span class='t' id='t106' style='left:1105px;top:370px;font-size:10px;font-weight:400;color:#1f1f1f;transform:translate(0.90px,0) scaleX(0.9000);clip-path:inset(0 calc(100% - 537.3px) 0 0)'>To:<span style='display:inline-block;width:16.9px'> </span>Gord MartineauCompany: CityNewsFrom:<span style='display:inline-block;width:11px'> </span>stephanie@cmic.caSubject: Project Contact List(Group by)FAx test af</span><span class='t' id='t107' style='left:47px;top:396px;font-size:10px;font-weight:400;color:#1f1f1f;transform:translate(0.40px,0) scaleX(0.9000);clip-path:inset(0 calc(100% - 89.6px) 0 0)'>SYSRPDOC</span><span class='t' id='t108' style='left:138px;top:396px;font-size:10px;font-weight:400;color:#1f1f1f;transform:translate(0.30px,0) scaleX(0.9000);clip-path:inset(0 calc(100% - 164.1px) 0 0)'>Form Letter</span><span class='t' id='t109' style='left:296px;top:396px;font-size:10px;font-weight:400;color:#1f1f1f;transform:translate(0.30px,0) scaleX(0.9000);clip-path:inset(0 calc(100% - 89.7px) 0 0)'>ALT</span><span class='t' id='t110' style='left:387px;top:396px;font-size:10px;font-weight:400;color:#1f1f1f;transform:translate(0.30px,0) scaleX(0.9000);clip-path:inset(0 calc(100% - 89.7px) 0 0)'>SMUSER6</span><span class='t' id='t111' style='left:478px;top:396px;font-size:10px;font-weight:400;color:#1f1f1f;transform:translate(0.30px,0) scaleX(0.9000);clip-path:inset(0 calc(100% - 89.7px) 0 0)'>SENT</span><span class='t' id='t112' style='left:569px;top:396px;font-size:10px;font-weight:400;color:#1f1f1f;transform:translate(0.30px,0) scaleX(0.9000);clip-path:inset(0 calc(100% - 116.3px) 0 0)'>SENT</span><span class='t' id='t113' style='left:684px;top:396px;font-size:10px;font-weight:400;color:#1f1f1f;transform:translate(0.00px,0) scaleX(0.9000);clip-path:inset(0 calc(100% - 114.4px) 0 0)'>2016/01/21 11:41:02</span><span class='t' id='t114' style='left:797px;top:396px;font-size:10px;font-weight:400;color:#1f1f1f;transform:translate(0.30px,0) scaleX(0.9000);clip-path:inset(0 calc(100% - 115.2px) 0 0)'>2016/01/21 11:41:12</span><span class='t' id='t115' style='left:910px;top:396px;font-size:10px;font-weight:400;color:#1f1f1f;transform:translate(0.60px,0) scaleX(0.9000);clip-path:inset(0 calc(100% - 89.3px) 0 0)'>(416) 736-1851</span><span class='t' id='t116' style='left:1001px;top:396px;font-size:10px;font-weight:400;color:#1f1f1f;transform:translate(0.30px,0) scaleX(0.9000);clip-path:inset(0 calc(100% - 105.2px) 0 0)'>George Allen</span><span class='t' id='t117' style='left:1105px;top:396px;font-size:10px;font-weight:400;color:#1f1f1f;transform:translate(0.90px,0) scaleX(0.9000);clip-path:inset(0 calc(100% - 537.3px) 0 0)'>Attention: George AllenCompany: Maestro Builders IncorporatedFrom: Donna PickersgillSubject: Fax of Subcontract Rep</span></body></html>
